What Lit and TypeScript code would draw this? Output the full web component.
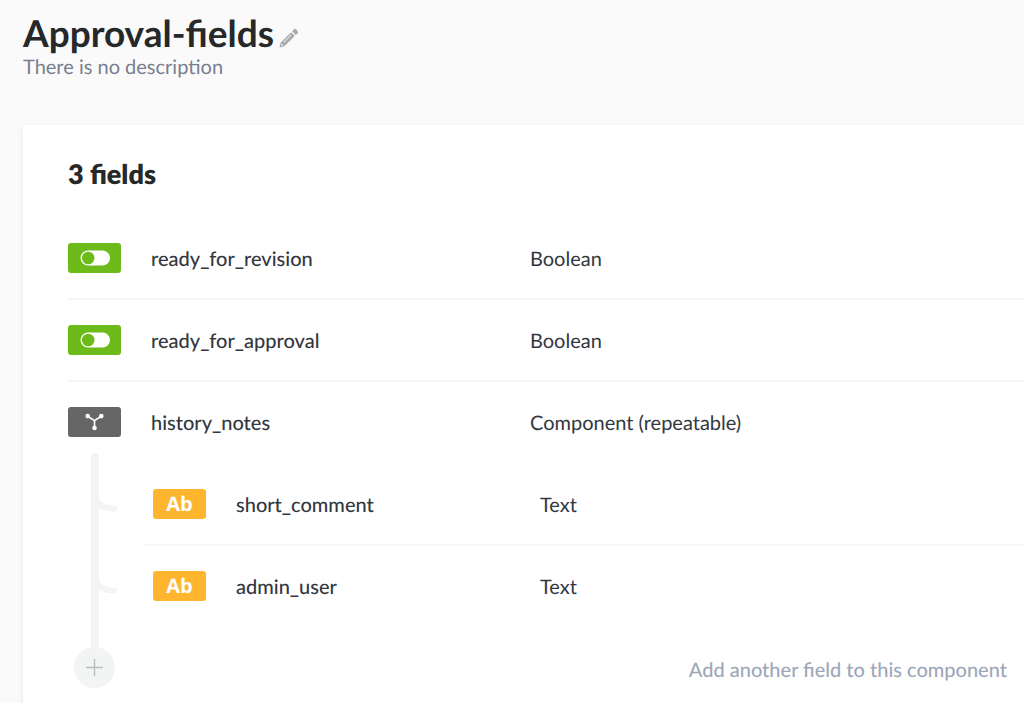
import { LitElement, html, css, svg, nothing } from "lit";
import { customElement, property } from "lit/decorators.js";

type FieldKind = "boolean" | "component" | "text";

interface Field {
  name: string;
  kind: FieldKind;
  type: string;
  children?: Field[];
}

const FIELDS: Field[] = [
  { name: "ready_for_revision", kind: "boolean", type: "Boolean" },
  { name: "ready_for_approval", kind: "boolean", type: "Boolean" },
  {
    name: "history_notes",
    kind: "component",
    type: "Component (repeatable)",
    children: [
      { name: "short_comment", kind: "text", type: "Text" },
      { name: "admin_user", kind: "text", type: "Text" },
    ],
  },
];

@customElement("field-badge")
export class FieldBadge extends LitElement {
  @property() kind: FieldKind = "text";

  static styles = css`
    :host {
      display: block;
    }
    .badge {
      display: flex;
      align-items: center;
      justify-content: center;
      width: 53px;
      height: 30px;
      border-radius: 3px;
      color: #fff;
      font: 700 20px/30px "Open Sans", sans-serif;
    }
    .boolean {
      background: #6dbb1a;
    }
    .component {
      background: #666;
    }
    .text {
      background: #ffb52d;
    }
    svg {
      display: block;
    }
  `;

  private glyph() {
    if (this.kind === "boolean") {
      return html`<svg width="30" height="16" viewBox="0 0 30 16" aria-hidden="true">
        ${svg`<rect x="0.5" y="0.5" width="29.5" height="15" rx="7.5" fill="#fff"/><circle cx="8.2" cy="8" r="6.3" fill="#6dbb1a"/>`}
      </svg>`;
    }
    if (this.kind === "component") {
      return html`<svg width="19" height="18" viewBox="0 0 19 18" aria-hidden="true">
        ${svg`<path d="M2.7 3.3 9.5 7.6 16.3 3.3M9.5 7.6V15" fill="none" stroke="#fff" stroke-width="1.7"/>
        <circle cx="2.7" cy="3.1" r="2.3" fill="#fff"/><circle cx="16.3" cy="3.1" r="2.3" fill="#fff"/><circle cx="9.5" cy="15" r="2.3" fill="#fff"/>`}
      </svg>`;
    }
    return "Ab";
  }

  render() {
    return html`<div class="badge ${this.kind}">${this.glyph()}</div>`;
  }
}

@customElement("app-root")
export class AppRoot extends LitElement {
  static styles = css`
    :host {
      display: flex;
      flex-direction: column;
      box-sizing: border-box;
      min-height: 100vh;
      padding: 11px 0 0 23px;
      background: #fafafb;
      color: #333740;
      font: 400 20px/24px Lato, sans-serif;
      text-rendering: geometricPrecision;
      overflow-x: hidden;
    }
    * {
      box-sizing: border-box;
    }
    button {
      padding: 0;
      border: 0;
      background: none;
      font: inherit;
      color: inherit;
      cursor: pointer;
      text-rendering: inherit;
    }
    svg {
      display: block;
    }
    .header {
      margin-bottom: 46px;
    }
    .title-row {
      display: flex;
      align-items: center;
      gap: 5px;
    }
    h1 {
      margin: 0;
      font-size: 37px;
      line-height: 44px;
      font-weight: 700;
      color: #262829;
    }
    .edit {
      margin-top: 9px;
    }
    .description {
      margin: 0;
      color: #787e8f;
    }
    .card {
      flex: 1;
      padding: 33px 0 15px 45px;
      background: #fff;
      box-shadow: 0 3px 6px #e3e9f3;
    }
    h2 {
      margin: 0 0 27px;
      font-size: 27px;
      line-height: 32px;
      font-weight: 800;
      color: #262829;
    }
    table {
      width: 100%;
      border-collapse: collapse;
      table-layout: fixed;
    }
    th,
    td {
      padding: 0;
      text-align: left;
      vertical-align: middle;
      font-weight: 400;
    }
    .field {
      height: 82px;
    }
    .ruled {
      box-shadow: 0 1px #f6f6f6, inset 0 -1px #f6f6f6;
    }
    .name,
    .type {
      padding-top: 2px;
    }
    .name {
      font-weight: 500;
    }
    .badge-col {
      width: 83px;
    }
    .name-col {
      width: 379px;
    }
    .nested .badge-col {
      width: 92px;
    }
    .nested .name-col {
      width: 304px;
    }
    .nested field-badge {
      padding-left: 9px;
    }
    .tree {
      position: relative;
      padding-left: 76px;
    }
    .tree::before {
      content: "";
      position: absolute;
      left: 23px;
      top: -10px;
      bottom: -24px;
      width: 8px;
      border-radius: 4px;
      background: #f3f4f4;
    }
    .branch-cell {
      position: relative;
    }
    .branch {
      position: absolute;
      left: -53px;
      top: 24px;
    }
    .footer {
      display: flex;
      align-items: center;
      justify-content: space-between;
      padding: 20px 17px 0 6px;
    }
    .plus {
      position: relative;
      display: grid;
      place-items: center;
      width: 41px;
      height: 41px;
      border-radius: 50%;
      background: #f3f4f4;
    }
    .add {
      margin-top: 4px;
      font-weight: 500;
      color: #9ea7b8;
    }
  `;

  private row(field: Field, ruled: boolean, nested: boolean) {
    return html`
      <tr class="field ${ruled ? "ruled" : ""}">
        <td class=${nested ? "branch-cell" : ""}>
          ${nested
            ? html`<svg class="branch" width="28" height="28" viewBox="0 0 28 28" aria-hidden="true">
                <path d="M3 0C3 16 9 21 23 21.5" fill="none" stroke="#f3f4f4" stroke-width="6" stroke-linecap="round" />
              </svg>`
            : nothing}
          <field-badge .kind=${field.kind}></field-badge>
        </td>
        <th class="name" scope="row">${field.name}</th>
        <td class="type">${field.type}</td>
      </tr>
      ${field.children
        ? html`<tr>
            <td class="tree" colspan="3">${this.table(field.children, true)}</td>
          </tr>`
        : nothing}
    `;
  }

  private table(fields: Field[], nested = false): unknown {
    return html`<table class=${nested ? "nested" : ""}>
      <colgroup>
        <col class="badge-col" />
        <col class="name-col" />
        <col />
      </colgroup>
      <tbody>
        ${fields.map((f, i) => this.row(f, i < fields.length - 1, nested))}
      </tbody>
    </table>`;
  }

  render() {
    return html`
      <header class="header">
        <div class="title-row">
          <h1>Approval-fields</h1>
          <button class="edit" type="button" aria-label="Edit">
            <svg width="20" height="20" viewBox="0 0 20 20" aria-hidden="true">
              <path fill="#a9aaab" fill-rule="evenodd" d="M12.1 4.3 15.8 8 5.3 18.3 0.6 19.5 1.5 14.8ZM2.7 15.6 2.2 17.8 4.4 17.3ZM11.8 6.5 4.4 13.9 5 14.5 12.4 7.1Z" />
              <path fill="#a9aaab" d="M13.1 3.3 15.1 1.3Q16 0.4 16.9 1.3L18.8 3.2Q19.6 4.1 18.8 5L16.8 7Z" />
            </svg>
          </button>
        </div>
        <p class="description">There is no description</p>
      </header>
      <main class="card">
        <h2>3 fields</h2>
        ${this.table(FIELDS)}
        <div class="footer">
          <button class="plus" type="button" aria-label="Add a field">
            <svg width="17" height="17" viewBox="0 0 17 17" aria-hidden="true">
              <path d="M8.5 0V17M0 8.5H17" stroke="#b8bbc0" stroke-width="1.4" />
            </svg>
          </button>
          <button class="add" type="button">Add another field to this component</button>
        </div>
      </main>
    `;
  }
}
